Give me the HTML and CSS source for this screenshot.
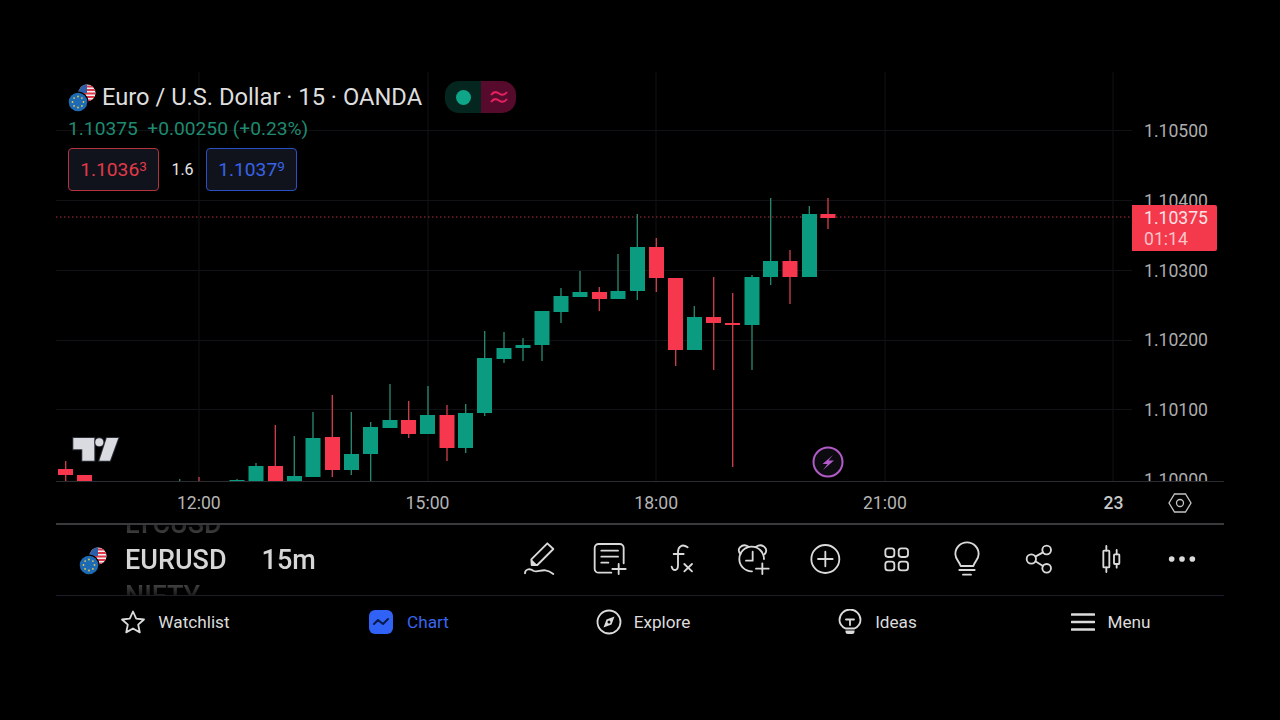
FILE: index.html
```html
<!DOCTYPE html>
<html lang="en">
<head>
<meta charset="utf-8">
<title>EURUSD Chart</title>
<link rel="stylesheet" href="styles.css">
</head>
<body>
<svg class="defs" width="0" height="0" aria-hidden="true">
  <defs>
    <clipPath id="us-clip"><circle cx="19" cy="10" r="8.5"/></clipPath>
    <symbol id="flags" viewBox="0 0 28 29">
      <g clip-path="url(#us-clip)">
        <rect x="10" y="1" width="18" height="18" fill="#f1f1f1"/>
        <path d="M10 3.5h18M10 7h18M10 10.500h18M10 14h18M10 17.500h18" stroke="#e0364a" stroke-width="1.800"/>
        <rect x="10" y="1" width="9" height="9" fill="#2d5fa8"/>
      </g>
      <circle cx="10" cy="19" r="10.500" fill="#000"/>
      <circle cx="10" cy="19" r="9.300" fill="#1e6bb5"/>
      <g fill="#e8c84a">
        <circle cx="10" cy="13.500" r=".9"/><circle cx="10" cy="24.500" r=".9"/><circle cx="4.500" cy="19" r=".9"/><circle cx="15.500" cy="19" r=".9"/>
        <circle cx="6.100" cy="15.100" r=".9"/><circle cx="13.900" cy="15.100" r=".9"/><circle cx="6.100" cy="22.900" r=".9"/><circle cx="13.900" cy="22.900" r=".9"/>
      </g>
    </symbol>
  </defs>
</svg>

<main class="app">
  <section class="chart">
    <svg class="plot" width="1168" height="409" viewBox="56 72 1168 409">
      <path class="grid" d="M199 72V481M428 72V481M656 72V481M885 72V481M1113 72V481M56 130.500H1132M56 200.500H1132M56 270.500H1132M56 340.500H1132M56 409.500H1132"/>
      <path class="price-line" d="M56 217H1132"/>
      <path class="wick up" d="M179.700 479V481M237 479V481M256 463V466M294.300 436V476M313 412V438M351.300 412V475M370.700 422V481M390 384V420M428 386V415M465.700 404V453M484.700 331V416M504 332V363M523 338V361M542 311V361M561 288V323M580 271V292M618 254V291M637.300 214V300M694.300 306V317M752 275V370M770.700 198V285M809.300 206V214"/>
      <path class="wick down" d="M65.700 461V481M199 477V481M275.300 425V466M332.300 395V477M408.700 401V438M447 405V461M599.300 287V311M656.300 238V292M675.700 350V366M713.700 277V370M732.700 293V467M790 250V304M828 198V229"/>
      <path class="body up" d="M229.500 480h15v1h-15zM248.500 466h15v15h-15zM287 476h15v5h-15zM305.500 438h15v39h-15zM344 454h15v16h-15zM363 427h15v27h-15zM382.500 420h15v8h-15zM420 415h15v19h-15zM458 413h15v35h-15zM477 358h15v55h-15zM496.500 348h15v11h-15zM515.500 345h15v3h-15zM534.500 311h15v34h-15zM553.500 296h15v16h-15zM572.500 292h15v5h-15zM610.500 291h15v8h-15zM630 247h15v44h-15zM687 317h15v33h-15zM744.500 277h15v48h-15zM763 261h15v16h-15zM802 214h15v63h-15z"/>
      <path class="body down" d="M58 469h15v6h-15zM77 475h15v6h-15zM268 466h15v15h-15zM325 437h15v33h-15zM401 420h15v14h-15zM439.500 415h15v33h-15zM592 292h15v7h-15zM649 247h15v31h-15zM668 278h15v72h-15zM706 317h15v6h-15zM725 323h15v2h-15zM782.500 261h15v16h-15zM820.500 214h15v4h-15z"/>
      <g class="tv-logo">
        <path d="M73.300 438H94.300V460.700H82.300V449.300H73.300Z"/>
        <circle cx="99.300" cy="442.300" r="4"/>
        <path d="M106.700 438H118.300L110 460.700H99.300Z"/>
      </g>
      <g class="bolt">
        <circle cx="828" cy="462" r="14.500"/>
        <path d="M833 455L822.500 464H827.500L823 470L834 460.500H828.500Z"/>
      </g>
    </svg>

    <div class="legend">
      <div class="legend-title">
        <svg class="flags-lg" width="28" height="29"><use href="#flags"/></svg>
        <span class="title-text">Euro / U.S. Dollar · 15 · OANDA</span>
        <span class="status">
          <span class="status-open"><i></i></span>
          <span class="status-delay">
            <svg width="20" height="16" viewBox="0 0 20 16"><path d="M2 6C5 2 8 3 10 4.500S15 7 18 3M2 13C5 9 8 10 10 11.500S15 14 18 10"/></svg>
          </span>
        </span>
      </div>
      <div class="legend-quote">1.10375&nbsp; +0.00250 (+0.23%)</div>
      <div class="legend-trade">
        <span class="trade sell">1.1036<sup>3</sup></span>
        <span class="spread">1.6</span>
        <span class="trade buy">1.1037<sup>9</sup></span>
      </div>
    </div>

    <div class="price-scale">
      <span>1.10500</span><span>1.10400</span><span>1.10300</span><span>1.10200</span><span>1.10100</span><span>1.10000</span>
    </div>
    <div class="price-tag"><b>1.10375</b><span>01:14</span></div>
  </section>

  <section class="time-axis">
    <span>12:00</span><span>15:00</span><span>18:00</span><span>21:00</span><span class="day">23</span>
    <svg class="settings" width="24" height="24" viewBox="0 0 24 24"><path d="M6.500 3H17.500L23 12L17.500 21H6.500L1 12Z"/><circle cx="12" cy="12" r="3.500"/></svg>
  </section>

  <section class="toolbar">
    <div class="wheel">
      <div class="wheel-row dim">LTCUSD</div>
      <div class="wheel-row current">
        <svg class="flags-sm" width="28" height="29"><use href="#flags"/></svg>
        <span>EURUSD</span><span class="tf">15m</span>
      </div>
      <div class="wheel-row dim">NIFTY</div>
    </div>
    <div class="tools">
      <button class="tool"><svg viewBox="36 33 108 108"><path d="M64 88L112 40L130 57L82 105H65Z"/><path class="solid" d="M64 88L82 105H65Z"/><path d="M45 130C45 118 58 114 70 122C85 131 100 108 130 132"/></svg></button>
      <button class="tool"><svg viewBox="250 33 108 108"><path d="M342 100V54A12 12 0 0 0 330 42H267A12 12 0 0 0 255 54V116A12 12 0 0 0 267 128H305"/><path d="M275 62H325M275 80H325M275 98H296M327 102V132M308 117H348"/></svg></button>
      <button class="tool"><svg viewBox="464 33 108 108"><path d="M532 52C515 40 503 50 503 66V106C503 124 488 124 484 110"/><path d="M490 72H520M522 102L545 124M545 102L522 124"/></svg></button>
      <button class="tool"><svg viewBox="678 33 108 108"><path d="M726 124A37 37 0 1 1 762 87"/><path d="M692 72C676 58 696 38 716 50M738 50C758 38 778 58 764 72M728 65V92H708M757 100V132M738 116H776"/></svg></button>
      <button class="tool"><svg viewBox="892 33 108 108"><circle cx="947" cy="87" r="42"/><path d="M947 65V109M925 87H969"/></svg></button>
      <button class="tool"><svg viewBox="26 33 108 108"><rect x="45" y="55" width="27" height="26" rx="8"/><rect x="85" y="55" width="28" height="26" rx="8"/><rect x="45" y="95" width="27" height="26" rx="8"/><rect x="85" y="95" width="28" height="26" rx="8"/></svg></button>
      <button class="tool"><svg viewBox="240 33 108 108"><path d="M272 108C268 94 256 88 256 72A35 35 0 0 1 326 72C326 88 314 94 310 108Z"/><path d="M268 120H314M279 134H303"/></svg></button>
      <button class="tool"><svg viewBox="454 33 108 108"><circle cx="531" cy="60" r="13"/><circle cx="485" cy="87" r="14"/><circle cx="531" cy="115" r="13"/><path d="M497 80L520 67M497 94L520 108"/></svg></button>
      <button class="tool"><svg viewBox="668 33 108 108"><rect x="699" y="62" width="18" height="50" rx="2"/><rect x="731" y="73" width="16" height="29" rx="2"/><path d="M708 48V62M708 112V126M739 60V73M739 102V113"/></svg></button>
      <button class="tool"><svg viewBox="882 33 108 108"><g class="solid"><circle cx="905" cy="87" r="8.500"/><circle cx="936" cy="87" r="8.500"/><circle cx="967" cy="87" r="8.500"/></g></svg></button>
    </div>
  </section>

  <nav class="nav">
    <a class="nav-item"><svg width="26" height="26" viewBox="0 0 26 26"><path d="M13 2.500L16.200 9.600L24 10.500L18.200 15.700L19.800 23.400L13 19.500L6.200 23.400L7.800 15.700L2 10.500L9.800 9.600Z"/></svg>Watchlist</a>
    <a class="nav-item active"><span class="chart-badge"><svg width="16" height="10" viewBox="0 0 16 10"><path d="M1 7L5 3L10 7L15 2"/></svg></span>Chart</a>
    <a class="nav-item"><svg width="26" height="26" viewBox="0 0 26 26"><circle cx="13" cy="13" r="11.500"/><path class="solid" d="M18.500 7.500L15.500 15.500L7.500 18.500L10.500 10.500Z"/><circle class="hole" cx="13" cy="13" r="1.500"/></svg>Explore</a>
    <a class="nav-item"><svg width="26" height="26" viewBox="0 0 26 26"><path d="M8.500 19.500C4.500 17.500 2.500 14.500 2.500 11A10.500 10.500 0 0 1 23.500 11C23.500 14.500 21.500 17.500 17.500 19.500Z"/><path d="M9 10.500H17M13 10.500V16"/><path class="solid" d="M8.500 21.500H17.500V22.500Q17.500 25 15 25H11Q8.500 25 8.500 22.500Z"/></svg>Ideas</a>
    <a class="nav-item"><svg width="24" height="20" viewBox="0 0 24 20"><path class="thick" d="M1 2.500H23M1 10H23M1 17.500H23"/></svg>Menu</a>
  </nav>
</main>
</body>
</html>
```
FILE: styles.css
```css
* { box-sizing: border-box; }
html, body { margin: 0; height: 100%; background: #000; overflow: hidden; }
body { font-family: Roboto, "Liberation Sans", sans-serif; color: #dcdcdc; }
.defs { position: absolute; }
.app { width: 1168px; margin-left: 56px; padding-top: 72px; }

/* chart */
.chart { position: relative; height: 410px; overflow: hidden; border-bottom: 1px solid #2a2c31; }
.plot { display: block; }
.grid { fill: none; stroke: #111215; stroke-width: 1; }
.price-line { stroke: #b03040; stroke-width: 1; stroke-dasharray: 1.500 2.500; fill: none; }
.wick { fill: none; stroke-width: 1.300; }
.wick.up { stroke: #2b8a74; }
.wick.down { stroke: #d2404e; }
.body.up { fill: #0b9b80; }
.body.down { fill: #f6374e; }
.tv-logo path, .tv-logo circle { fill: #d9dbe0; stroke: #2b2f39; stroke-width: 2; paint-order: stroke; }
.bolt circle { fill: #0c0c10; stroke: #b25ac8; stroke-width: 2; }
.bolt path { fill: #b25ac8; }

/* legend */
.legend { position: absolute; left: 12px; top: 9px; display: flex; flex-direction: column; }
.legend-title { display: flex; align-items: center; height: 32px; }
.title-text { margin-left: 6px; font-size: 23.700px; color: #dedede; white-space: nowrap; }
.status { display: flex; height: 32px; margin-left: 23px; border-radius: 14px; overflow: hidden; }
.status-open { width: 36px; background: #04261f; display: flex; align-items: center; justify-content: center; }
.status-open i { width: 15px; height: 15px; border-radius: 50%; background: #0fa589; margin-left: 1px; }
.status-delay { width: 35px; background: #570b2c; display: flex; align-items: center; justify-content: center; }
.status-delay svg path { fill: none; stroke: #e3215f; stroke-width: 2; }
.legend-quote { height: 32px; line-height: 32px; font-size: 19.200px; color: #1f8a70; white-space: nowrap; }
.legend-trade { display: flex; align-items: center; margin-top: 3px; }
.trade { display: flex; align-items: flex-start; justify-content: center; width: 91px; height: 43px; border: 1px solid; border-radius: 4px; background: #10131b; font-size: 19.200px; line-height: 41px; }
.trade sup { font-size: 13.500px; line-height: 1; margin-top: 11px; }
.sell { color: #e23a4a; border-color: #b3343f; }
.buy { color: #3863e6; border-color: #2b50c4; }
.spread { width: 47px; text-align: center; font-size: 16px; color: #e8e8e8; }

/* price scale */
.price-scale { position: absolute; left: 1088px; top: 24px; display: flex; flex-direction: column; }
.price-scale span { height: 69.800px; line-height: 70px; font-size: 17.600px; color: #adadad; }
.price-tag { position: absolute; left: 1076px; top: 133px; width: 85px; height: 46px; padding: 2px 0 0 12px; background: #f4394c; border-radius: 0 2px 2px 0; display: flex; flex-direction: column; justify-content: center; font-size: 17.600px; line-height: 21px; color: #f9c3c9; }
.price-tag b { font-weight: 400; color: #fde3e5; }

/* time axis */
.time-axis { position: relative; height: 41px; display: flex; align-items: center; padding-left: 28.500px; font-size: 17.600px; color: #b4b4b4; }
.time-axis span { flex: none; width: 228.700px; text-align: center; }
.time-axis .day { color: #c8c8c8; font-weight: 500; }
.settings { position: absolute; left: 1112px; top: 9px; }
.settings path, .settings circle { fill: none; stroke: #c4c4c4; stroke-width: 1.300; }

/* toolbar */
.toolbar { height: 73px; border-top: 2px solid #3a3a3d; border-bottom: 1px solid #1d1d28; display: flex; align-items: stretch; justify-content: space-between; padding-right: 6.400px; }
.wheel { height: 70px; overflow: hidden; display: flex; flex-direction: column; justify-content: center; -webkit-mask-image: linear-gradient(to bottom, rgba(0,0,0,.35), #000 35%, #000 68%, rgba(0,0,0,.25)); mask-image: linear-gradient(to bottom, rgba(0,0,0,.35), #000 35%, #000 68%, rgba(0,0,0,.25)); }
.wheel-row { flex: none; height: 34px; line-height: 34px; padding-left: 69px; font-size: 27px; white-space: nowrap; color: #d6d6d6; font-weight: 500; }
.wheel-row.dim { color: #6e6e6e; }
.wheel-row.current { display: flex; align-items: center; padding-left: 23px; height: 38px; }
.flags-sm { margin-right: 18px; }
.tf { margin-left: 35px; }
.tools { display: flex; align-items: center; margin-top: -2px; }
.tool { flex: none; width: 71.330px; height: 36px; padding: 0; background: none; border: 0; display: flex; justify-content: center; }
.tool svg { width: 36px; height: 36px; fill: none; stroke: #dadada; stroke-width: 5.500; stroke-linecap: round; stroke-linejoin: round; }
.tool .solid { fill: #dadada; stroke: none; }

/* bottom nav */
.nav { width: 1170px; margin-left: 2px; height: 52px; display: grid; grid-template-columns: repeat(5, 1fr); }
.nav-item { display: flex; align-items: center; justify-content: center; gap: 12px; font-size: 17.200px; color: #dcdcdc; }
.nav-item svg { fill: none; stroke: #dcdcdc; stroke-width: 1.800; stroke-linejoin: round; stroke-linecap: round; }
.nav-item .solid { fill: #dcdcdc; stroke: none; }
.nav-item .hole { fill: #000; stroke: none; }
.nav-item .thick { stroke-width: 2.600; }
.nav-item.active { color: #3a66ee; gap: 14px; }
.chart-badge { width: 24px; height: 24px; border-radius: 6px; background: #2f62f5; display: flex; align-items: center; justify-content: center; }
.nav-item .chart-badge svg { stroke: #0a1a4a; stroke-width: 2; }
```
